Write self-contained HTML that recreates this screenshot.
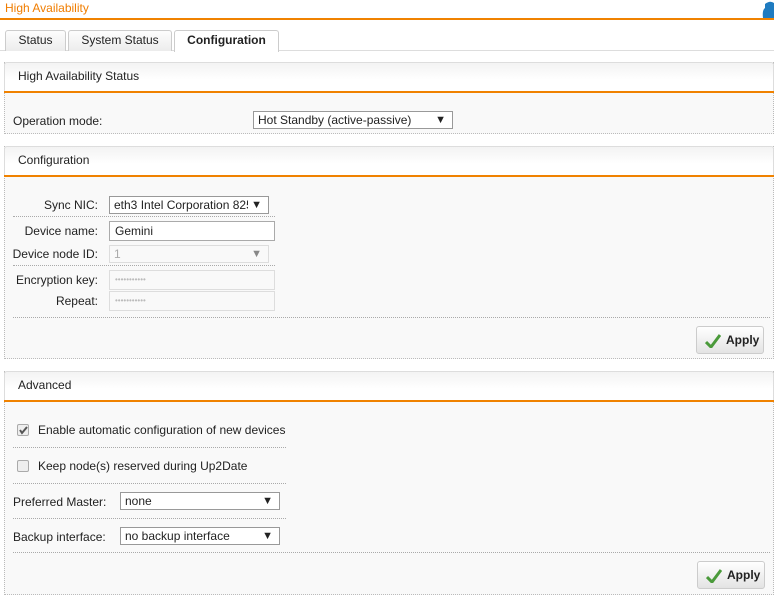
<!DOCTYPE html>
<html><head><meta charset="utf-8"><style>
*{box-sizing:border-box;margin:0;padding:0}
body{width:774px;height:595px;overflow:hidden;background:#fff;font-family:"Liberation Sans",Arial,sans-serif;font-size:12px;color:#222;position:relative}
.a{position:absolute}
.title{left:5px;top:1px;color:#f07d00;font-size:12px}
.oline{left:0;top:18px;width:774px;height:2px;background:#f08200}
.tab{top:30px;height:21px;border:1px solid #ccc;border-bottom:none;border-radius:3px 3px 0 0;background:linear-gradient(#fdfdfd,#ececec);text-align:center;line-height:19px;font-size:12px}
.tabline{left:0;top:50px;width:774px;height:1px;background:#ddd}
.panel{left:4px;width:770px;border:1px dotted #bbb;border-top:none;background:#f9f9f9}
.ph{left:4px;width:770px;height:29px;border:1px solid #ddd;border-bottom:none;border-radius:3px 3px 0 0;background:linear-gradient(#f3f3f3,#fff 60%);padding-left:13px;line-height:27px;font-size:12px}
.ph:after{content:"";position:absolute;left:-1px;right:-1px;bottom:-2px;height:2px;background:#f08200}
.sel{height:18px;border:1px solid #999;background:#fff;padding-left:4px;line-height:16px;font-size:12px}
.sel span{position:absolute;right:6px;top:0;font-size:11px}
.inp{border:1px solid #aaa;background:#fff;padding-left:5px;line-height:18px}
.dis{border:1px solid #ddd;background:#f9f9f9;color:#bbb}
.lbl{text-align:right;width:90px;left:8px}
.dot{height:0;border-top:1px dotted #aaa}
.btn{width:68px;height:28px;border:1px solid #ccc;border-radius:3px;background:linear-gradient(#fff,#e3e3e3);font-weight:bold;line-height:26px;padding-left:29px;font-size:12px}
.btn svg{position:absolute;left:8px;top:7px}
.cb{width:12px;height:12px;border:1px solid #aaa;border-radius:2px;background:#eee;left:17px}
</style></head><body>
<div class="a title">High Availability</div>
<div class="a oline"></div>
<svg class="a" style="left:760px;top:0" width="14" height="18"><path d="M5 4 Q10 0 14 3 V18 H3 Q2 10 5 8Z" fill="#1f7bc0"/></svg>
<div class="a tabline"></div>
<div class="a tab" style="left:5px;width:61px">Status</div>
<div class="a tab" style="left:68px;width:104px">System Status</div>
<div class="a tab" style="left:174px;width:105px;height:22px;background:#fff;font-weight:bold">Configuration</div>

<div class="a panel" style="top:62px;height:72px"></div>
<div class="a ph" style="top:62px">High Availability Status</div>
<div class="a" style="left:13px;top:114px">Operation mode:</div>
<div class="a sel" style="left:253px;top:111px;width:200px">Hot Standby (active-passive)<span>▼</span></div>

<div class="a panel" style="top:146px;height:213px"></div>
<div class="a ph" style="top:146px">Configuration</div>
<div class="a lbl" style="top:198px">Sync NIC:</div>
<div class="a sel" style="left:109px;top:196px;width:160px;overflow:hidden">eth3 Intel Corporation 825<span style="background:#fff;padding-left:3px">▼</span></div>
<div class="a dot" style="left:13px;top:216px;width:262px"></div>
<div class="a lbl" style="top:224px">Device name:</div>
<div class="a inp" style="left:109px;top:221px;width:166px;height:20px">Gemini</div>
<div class="a lbl" style="top:247px">Device node ID:</div>
<div class="a sel dis" style="left:109px;top:245px;width:160px;color:#aaa">1<span style="color:#888">▼</span></div>
<div class="a dot" style="left:13px;top:265px;width:262px"></div>
<div class="a lbl" style="top:273px">Encryption key:</div>
<div class="a inp dis" style="left:109px;top:270px;width:166px;height:20px;font-size:8px;line-height:17px">•••••••••••</div>
<div class="a lbl" style="top:294px">Repeat:</div>
<div class="a inp dis" style="left:109px;top:291px;width:166px;height:20px;font-size:8px;line-height:17px">•••••••••••</div>
<div class="a dot" style="left:13px;top:317px;width:757px"></div>
<div class="a btn" style="left:696px;top:326px"><svg width="16" height="14"><path d="M1 8 L6 13 L15 1" stroke="#4a9a3a" stroke-width="3" fill="none"/></svg>Apply</div>

<div class="a panel" style="top:371px;height:224px"></div>
<div class="a ph" style="top:371px">Advanced</div>
<div class="a cb" style="top:424px"><svg width="10" height="10" style="position:absolute;left:0;top:0"><path d="M2 5 L4 8 L9 2" stroke="#555" stroke-width="2" fill="none"/></svg></div>
<div class="a" style="left:38px;top:423px">Enable automatic configuration of new devices</div>
<div class="a dot" style="left:13px;top:447px;width:273px"></div>
<div class="a cb" style="top:460px"></div>
<div class="a" style="left:38px;top:459px">Keep node(s) reserved during Up2Date</div>
<div class="a dot" style="left:13px;top:483px;width:273px"></div>
<div class="a" style="left:13px;top:495px">Preferred Master:</div>
<div class="a sel" style="left:120px;top:492px;width:160px">none<span>▼</span></div>
<div class="a dot" style="left:13px;top:518px;width:273px"></div>
<div class="a" style="left:13px;top:530px">Backup interface:</div>
<div class="a sel" style="left:120px;top:527px;width:160px">no backup interface<span>▼</span></div>
<div class="a dot" style="left:13px;top:552px;width:757px"></div>
<div class="a btn" style="left:697px;top:561px"><svg width="16" height="14"><path d="M1 8 L6 13 L15 1" stroke="#4a9a3a" stroke-width="3" fill="none"/></svg>Apply</div>
</body></html>
